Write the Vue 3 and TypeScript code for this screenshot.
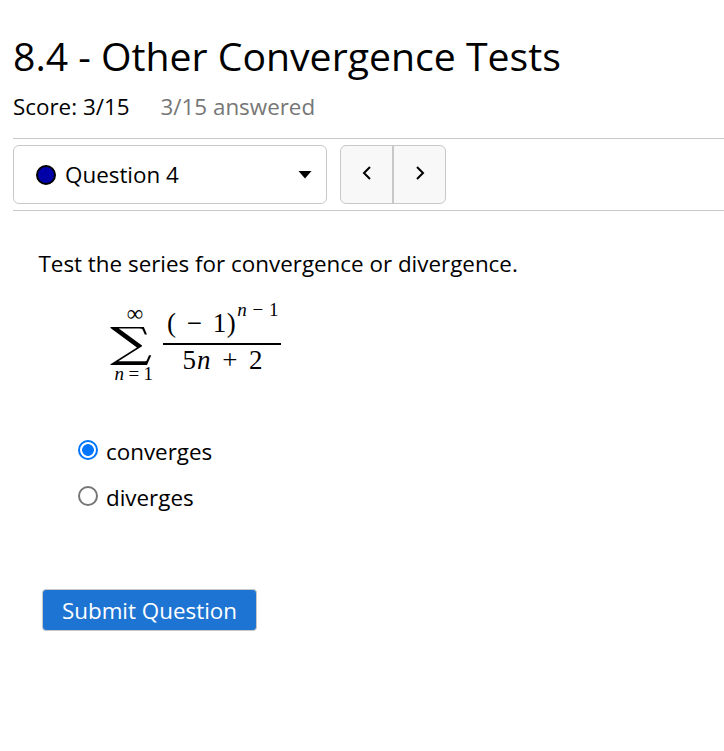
<script setup lang="ts">
const options: { label: string; checked: boolean }[] = [
  { label: 'converges', checked: true },
  { label: 'diverges', checked: false },
]
</script>

<template>
  <main class="page">
    <h1 class="title">8.4 - Other Convergence Tests</h1>
    <div class="scores">
      <span>Score: 3/15</span>
      <span class="answered">3/15 answered</span>
    </div>
    <nav class="toolbar">
      <div class="select">
        <span class="dot"></span>
        <span class="select-label">Question 4</span>
        <svg class="caret" width="14" height="9" viewBox="0 0 14 9"><path d="M0.5 1h13L7 8.5z" fill="#000" /></svg>
      </div>
      <div class="pager">
        <button class="page-btn" type="button" aria-label="Previous">
          <svg width="10" height="16" viewBox="0 0 10 16"><path d="M8 2L2 8l6 6" fill="none" stroke="#000" stroke-width="2" /></svg>
        </button>
        <button class="page-btn divided" type="button" aria-label="Next">
          <svg width="10" height="16" viewBox="0 0 10 16"><path d="M2 2l6 6-6 6" fill="none" stroke="#000" stroke-width="2" /></svg>
        </button>
      </div>
    </nav>
    <section class="question">
      <p class="prompt">Test the series for convergence or divergence.</p>
      <div class="math">
        <div class="sum">
          <span class="limit inf">∞</span>
          <span class="sigma">∑</span>
          <span class="limit low"><i>n</i>=1</span>
        </div>
        <div class="frac">
          <div class="num">( − 1)<sup><i>n</i> − 1</sup></div>
          <div class="den">5<i>n</i> + 2</div>
        </div>
      </div>
      <ul class="options">
        <li v-for="o in options" :key="o.label" class="option">
          <span class="radio" :class="{ on: o.checked }"></span>
          <span>{{ o.label }}</span>
        </li>
      </ul>
      <button class="submit" type="button">Submit Question</button>
    </section>
  </main>
</template>

<style scoped>
.page {
  box-sizing: border-box;
  width: 724px;
  height: 751px;
  padding: 32px 0 0 13px;
  background: #fff;
  color: #000;
  font-family: "Open Sans", sans-serif;
  font-size: 22.4px;
  overflow: hidden;
}
.title {
  margin: 0;
  font-size: 39.2px;
  font-weight: 400;
  line-height: 48px;
}
.scores {
  display: flex;
  gap: 31px;
  margin-top: 12px;
  line-height: 30px;
}
.answered { color: #767676; }
.toolbar {
  display: flex;
  gap: 13px;
  margin-top: 16px;
  padding: 6px 0;
  border-top: 1px solid #c8c8c8;
  border-bottom: 1px solid #c8c8c8;
}
.select {
  box-sizing: border-box;
  display: flex;
  align-items: center;
  width: 314px;
  height: 59px;
  padding: 0 14px 0 22px;
  border: 1px solid #c8c8c8;
  border-radius: 6px;
}
.dot {
  box-sizing: border-box;
  width: 20px;
  height: 20px;
  border-radius: 50%;
  background: #0000a8;
  border: 2px solid #000;
}
.select-label { margin-left: 9px; flex: 1; }
.pager {
  box-sizing: border-box;
  display: flex;
  width: 106px;
  height: 59px;
  border: 1px solid #c8c8c8;
  border-radius: 6px;
  background: #f8f8f8;
  overflow: hidden;
}
.page-btn {
  flex: 1;
  display: flex;
  align-items: center;
  justify-content: center;
  padding: 0 0 4px;
  border: 0;
  background: transparent;
}
.divided { border-left: 2px solid #c8c8c8; }
.question { padding: 0 0 0 26px; }
.prompt {
  margin: 38px 0 0 -0.5px;
  line-height: 30px;
}
.math {
  display: flex;
  align-items: flex-start;
  gap: 7px;
  margin: 20px 0 0 69px;
  font-family: "Liberation Serif", serif;
  font-size: 27px;
  line-height: 30px;
}
.sum {
  display: flex;
  flex-direction: column;
  align-items: center;
  width: 48px;
  padding-top: 6px;
}
.limit { font-size: 19px; line-height: 18px; }
.inf { margin-left: 6px; font-size: 23px; }
.low { letter-spacing: 4.5px; margin: 2px 0 0 8px; white-space: nowrap; }
.sigma {
  font-family: "DejaVu Serif", serif;
  font-size: 42px;
  line-height: 40px;
  transform: scaleX(1.4);
  margin-left: -2px;
}
.frac {
  display: flex;
  flex-direction: column;
  align-items: center;
  width: 118px;
  padding-top: 6px;
}
.num {
  align-self: stretch;
  box-sizing: border-box;
  height: 40px;
  padding: 3px 0 0 4px;
  border-bottom: 2px solid #000;
  white-space: nowrap;
  word-spacing: 3px;
  letter-spacing: 0.5px;
}
.num sup { font-size: 19px; line-height: 0; vertical-align: 16px; letter-spacing: 0.5px; word-spacing: 0; margin-left: 1px; }
.den { letter-spacing: 1px; word-spacing: 3px; margin-left: 2px; }
.options {
  margin: 45px 0 0 39px;
  padding: 0;
  list-style: none;
}
.option {
  display: flex;
  align-items: center;
  gap: 8px;
  height: 46px;
}
.radio {
  box-sizing: border-box;
  width: 20px;
  height: 20px;
  border-radius: 50%;
  border: 2px solid #767676;
  margin-bottom: 2px;
}
.radio.on {
  border-color: #0075ff;
  background: radial-gradient(circle, #0075ff 0 5.5px, #fff 6.2px);
}
.submit {
  display: block;
  box-sizing: border-box;
  width: 215px;
  height: 42px;
  margin: 69px 0 0 3px;
  padding: 0;
  border: 1px solid #c8c8c8;
  border-radius: 4px;
  background: #1d74d2;
  color: #fff;
  font-family: inherit;
  font-size: 22.4px;
}
</style>
